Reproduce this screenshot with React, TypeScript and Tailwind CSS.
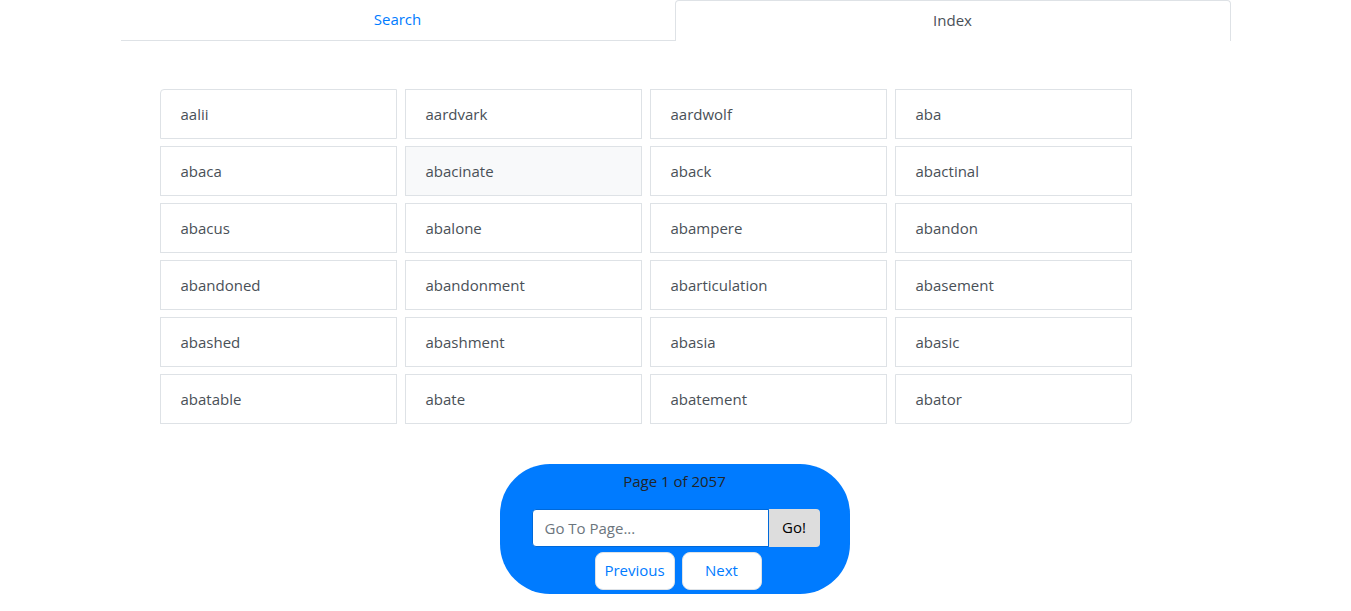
import React from "react";

const words = [
  "aalii", "aardvark", "aardwolf", "aba",
  "abaca", "abacinate", "aback", "abactinal",
  "abacus", "abalone", "abampere", "abandon",
  "abandoned", "abandonment", "abarticulation", "abasement",
  "abashed", "abashment", "abasia", "abasic",
  "abatable", "abate", "abatement", "abator",
];

export default function App() {
  return (
    <div className="min-h-[611px] bg-white text-[15px] text-[#212529]" style={{ fontFamily: '"Open Sans", "Noto Sans", sans-serif' }}>
      <div className="mx-auto w-[1110px]">
        <div className="flex h-[41px]">
          <div className="flex flex-1 items-center justify-center border-b border-[#dee2e6] pb-[1px] text-[#007bff]">Search</div>
          <div className="flex flex-1 items-center justify-center rounded-t-[4px] border-x border-t border-[#dee2e6] pb-[1px] text-[#495057]">Index</div>
        </div>
      </div>
      <div className="mx-auto mt-[48px] grid w-[972px] -translate-x-[30px] grid-cols-4 gap-x-[8px] gap-y-[7px]">
        {words.map((w, i) => (
          <div
            key={w}
            className={`flex h-[50px] items-center border border-[#dee2e6] pl-[20px] text-[#495057] ${w === "abacinate" ? "bg-[#f8f9fa]" : "bg-white"} ${i === 0 ? "rounded-tl-[4px]" : ""} ${i === words.length - 1 ? "rounded-br-[4px]" : ""}`}
          >
            {w}
          </div>
        ))}
      </div>
      <div className="mt-[40px] flex justify-center">
        <div className="flex h-[130px] w-[350px] -translate-x-[1px] flex-col items-center rounded-[50px] bg-[#007bff] pt-[6px]">
          <div className="text-[#212529]">Page 1 of 2057</div>
          <div className="ml-[2px] mt-[16px] flex h-[38px] w-[288px]">
            <input
              placeholder="Go To Page..."
              className="h-full w-[237px] rounded-l-[4px] border border-[#0069d9] bg-white px-[12px] text-[#495057] outline-none placeholder:text-[#6c757d]"
            />
            <button className="h-full flex-1 rounded-r-[4px] bg-[#dddddd] text-black">Go!</button>
          </div>
          <div className="ml-[7px] mt-[5px] flex gap-[7px]">
            <button className="h-[38px] w-[80px] rounded-[8px] border border-[#dee2e6] bg-white text-[#007bff]">Previous</button>
            <button className="h-[38px] w-[80px] rounded-[8px] border border-[#dee2e6] bg-white text-[#007bff]">Next</button>
          </div>
        </div>
      </div>
    </div>
  );
}
